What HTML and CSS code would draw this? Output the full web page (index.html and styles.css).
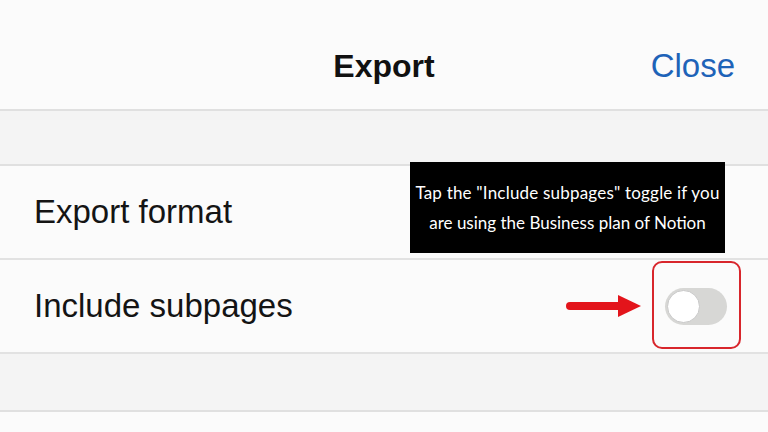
FILE: index.html
```html
<!DOCTYPE html>
<html lang="en">
<head>
<meta charset="utf-8">
<title>Export</title>
<link rel="stylesheet" href="styles.css">
</head>
<body>
<div class="screen">
  <header class="topbar">
    <div class="spacer"></div>
    <h1 class="title">Export</h1>
    <div class="actions"><span class="close">Close</span></div>
  </header>
  <div class="gap"></div>
  <div class="row"><span class="label">Export format</span></div>
  <div class="row">
    <span class="label">Include subpages</span>
    <span class="toggle"><span class="knob"></span></span>
  </div>
  <div class="gap gap-bottom"></div>

  <div class="tooltip">
    <p class="wide">Tap the "Include subpages" toggle if you</p>
    <p>are using the Business plan of Notion</p>
  </div>
  <svg class="arrow" width="80" height="26" viewBox="0 0 80 26">
    <line x1="4" y1="13" x2="56" y2="13" stroke="#e3141b" stroke-width="8" stroke-linecap="round"/>
    <polygon points="52,2 75,13 52,24" fill="#e3141b"/>
  </svg>
  <div class="highlight"></div>
</div>
</body>
</html>
```

FILE: styles.css
```css
* { box-sizing: border-box; }
html, body { margin: 0; padding: 0; }
body {
  width: 768px;
  height: 432px;
  overflow: hidden;
  background: #fbfbfb;
  font-family: "Liberation Sans", Arial, sans-serif;
  color: #111;
}
.screen { position: relative; width: 768px; height: 432px; }
.topbar {
  height: 111px;
  display: grid;
  grid-template-columns: 1fr auto 1fr;
  align-items: start;
  padding-top: 49px;
  border-bottom: 2px solid #e0e0e0;
  background: #fbfbfb;
}
.title {
  margin: 0;
  margin-top: 1px;
  font-size: 32px;
  line-height: 1;
  font-weight: 700;
  color: #111;
}
.actions { display: flex; justify-content: flex-end; padding-right: 33px; }
.close { font-size: 33px; line-height: 1; color: #1e63b8; }
.gap {
  height: 55px;
  background: #f4f4f4;
  border-bottom: 2px solid #e0e0e0;
}
.gap-bottom { height: 58px; }
.row {
  height: 94px;
  display: flex;
  align-items: center;
  justify-content: space-between;
  padding: 0 41px 0 34px;
  border-bottom: 2px solid #e2e2e2;
  background: #fbfbfb;
}
.label { font-size: 33px; color: #141414; }
.toggle {
  width: 62px;
  height: 37px;
  border-radius: 19px;
  background: #d7d7d5;
  display: flex;
  align-items: center;
  padding-left: 2px;
}
.knob {
  width: 33px;
  height: 33px;
  border-radius: 50%;
  background: #fff;
  border: 1px solid #c9c9c9;
}
.tooltip {
  position: absolute;
  left: 410px;
  top: 162px;
  width: 315px;
  height: 91px;
  background: #000;
  color: #fff;
  display: flex;
  flex-direction: column;
  justify-content: center;
  align-items: center;
  font-family: "Lato", sans-serif;
  font-size: 17px;
}
.tooltip p { margin: 0; line-height: 30px; white-space: nowrap; }
.tooltip .wide { letter-spacing: 0.2px; }
.arrow { position: absolute; left: 566px; top: 293px; }
.highlight {
  position: absolute;
  left: 652px;
  top: 261px;
  width: 89px;
  height: 88px;
  border: 2.5px solid #d8262c;
  border-radius: 10px;
}
```
